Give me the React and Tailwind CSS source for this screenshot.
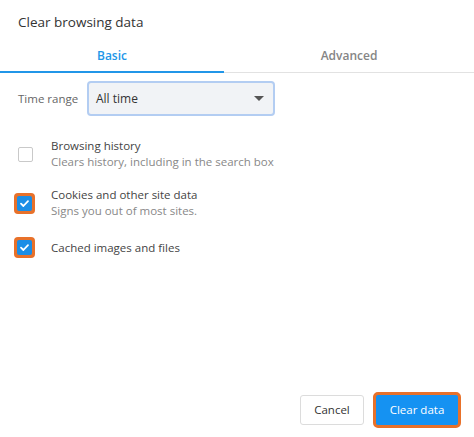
import React from "react";

function Check({ checked }) {
  if (!checked) {
    return (
      <div className="w-[20px] h-[20px] flex items-center justify-center shrink-0">
        <div className="w-[15px] h-[15px] rounded-[2px] border border-[#c9c9c9] bg-white" />
      </div>
    );
  }
  return (
    <div className="w-[21px] h-[21px] rounded-[4px] bg-[#e8712a] flex items-center justify-center shrink-0">
      <div className="w-[15px] h-[15px] rounded-[2px] bg-[#1b8ee6] flex items-center justify-center">
        <svg width="11" height="11" viewBox="0 0 11 11">
          <path d="M2 5.6 L4.4 8 L9 3.2" fill="none" stroke="white" strokeWidth="1.8" strokeLinecap="round" strokeLinejoin="round" />
        </svg>
      </div>
    </div>
  );
}

export default function App() {
  return (
    <div className="w-[474px] h-[437px] bg-white flex flex-col text-[#333]" style={{ fontFamily: '"Open Sans", "Noto Sans", sans-serif' }}>
      <div className="pl-[18px] pt-[12px] h-[40px] text-[13.5px] text-[#333]">Clear browsing data</div>
      <div className="flex h-[33px] border-b border-[#e2e2e2]">
        <div className="w-[224px] flex items-center justify-center text-[12px] font-semibold text-[#2196e8] border-b-2 border-[#2196e8] mb-[-1px]">Basic</div>
        <div className="flex-1 flex items-center justify-center text-[12px] font-semibold text-[#858585]">Advanced</div>
      </div>
      <div className="flex items-center pl-[18px] mt-[8px]">
        <span className="text-[11.5px] text-[#666] w-[69px]">Time range</span>
        <div className="w-[188px] h-[35px] rounded-[4px] border-2 border-[#b3cdf2] bg-[#f1f3f6] flex items-center justify-between pl-[7px] pr-[9px]">
          <span className="text-[12px] text-[#333]">All time</span>
          <svg width="10" height="6" viewBox="0 0 10 6"><path d="M0 0 L10 0 L5 5 Z" fill="#555" /></svg>
        </div>
      </div>
      <div className="flex flex-col pl-[15px] mt-[22px]">
        <div className="flex items-center gap-[16px]">
          <Check checked={false} />
          <div className="flex flex-col leading-[16px]">
            <span className="text-[11.5px] text-[#444]">Browsing history</span>
            <span className="text-[11.5px] text-[#888]">Clears history, including in the search box</span>
          </div>
        </div>
        <div className="flex items-center gap-[16px] ml-[-1px] mt-[17px]">
          <Check checked />
          <div className="flex flex-col leading-[16px]">
            <span className="text-[11.5px] text-[#444]">Cookies and other site data</span>
            <span className="text-[11.5px] text-[#888]">Signs you out of most sites.</span>
          </div>
        </div>
        <div className="flex items-center gap-[16px] ml-[-1px] mt-[18px]">
          <Check checked />
          <span className="text-[11.5px] text-[#444]">Cached images and files</span>
        </div>
      </div>
      <div className="flex-1" />
      <div className="flex justify-end items-center gap-[9px] pr-[13px] pb-[9px]">
        <button className="w-[64px] h-[30px] rounded-[3px] border border-[#dcdcdc] bg-white text-[11.5px] text-[#333]">Cancel</button>
        <button className="w-[88px] h-[36px] rounded-[5px] border-[3px] border-[#e8712a] bg-[#1592f2] text-[11.5px] text-white">Clear data</button>
      </div>
    </div>
  );
}
